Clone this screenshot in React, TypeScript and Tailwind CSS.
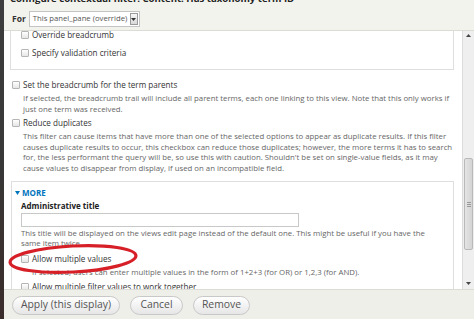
import React from "react";

const Checkbox = () => (
  <span className="inline-block w-[8px] h-[8px] shrink-0 border border-[#b5b5b5] bg-gradient-to-b from-white to-[#e6e6e6] rounded-[1px]" />
);

const CheckRow = ({ label, className = "" }: { label: string; className?: string }) => (
  <div className={"flex items-center gap-[3px] h-[12px] text-[8.1px] text-[#333] " + className}>
    <Checkbox />
    <span className="leading-[12px] whitespace-nowrap">{label}</span>
  </div>
);

export default function App() {
  return (
    <div className="w-[474px] h-[319px] flex overflow-hidden bg-[#3a3a3a] font-['Open_Sans',sans-serif]">
      <div className="w-[4px] bg-gradient-to-b from-[#3d3d3d] via-[#383838] to-[#3a2c2a]" />
      <div className="flex-1 flex flex-col min-w-0 bg-white">
        {/* header */}
        <div className="h-[31px] shrink-0 bg-[#f3f3ee] border-b border-[#dcdcd6] pl-[6px] flex flex-col overflow-hidden">
          <div className="mt-[-7px] h-[12px] leading-[12px] text-[9.6px] font-bold text-[#222] whitespace-nowrap">
            Configure contextual filter: Content: Has taxonomy term ID
          </div>
          <div className="mt-[6px] flex items-center gap-[3px]">
            <span className="text-[8.5px] font-bold text-[#333] pl-[2px]">For</span>
            <div className="w-[111px] h-[16px] bg-white border border-[#c4c4c4] flex items-center justify-between pl-[3px] pr-[1px]">
              <span className="text-[7.7px] text-[#555] whitespace-nowrap">This panel_pane (override)</span>
              <span className="w-[8px] h-[12px] border border-[#9a9a9a] bg-gradient-to-b from-[#f8f8f8] to-[#d8d8d8] flex items-center justify-center">
                <svg width="5" height="3" viewBox="0 0 5 3"><path d="M0 0h5L2.5 3z" fill="#333" /></svg>
              </span>
            </div>
          </div>
        </div>
        {/* main */}
        <div className="flex-1 flex min-h-0">
          <div className="relative flex-1 overflow-hidden pl-[8px] pr-[8px]">
            {/* first fieldset (scrolled) */}
            <div className="ml-[-2px] border-l border-r border-b border-[#dedede] pl-[10px] pb-[10px] mt-[-2px]">
              <CheckRow label="Override breadcrumb" />
              <CheckRow label="Specify validation criteria" className="mt-[6px]" />
            </div>
            <CheckRow label="Set the breadcrumb for the term parents" className="mt-[9px]" />
            <div className="ml-[11px] mt-[2px] text-[7.8px] leading-[11px] text-[#666] whitespace-nowrap">
              If selected, the breadcrumb trail will include all parent terms, each one linking to this view. Note that this only works if
              <br />
              just one term was received.
            </div>
            <CheckRow label="Reduce duplicates" className="mt-[2px]" />
            <div className="ml-[11px] mt-[2px] text-[7.8px] leading-[10.5px] text-[#666] whitespace-nowrap">
              This filter can cause items that have more than one of the selected options to appear as duplicate results. If this filter
              <br />
              causes duplicate results to occur, this checkbox can reduce those duplicates; however, the more terms it has to search
              <br />
              for, the less performant the query will be, so use this with caution. Shouldn't be set on single-value fields, as it may
              <br />
              cause values to disappear from display, if used on an incompatible field.
            </div>
            {/* MORE fieldset */}
            <div className="ml-[-1px] mt-[8px] border border-[#dedede] pl-[9px] pt-[5px] pb-[10px]">
              <div className="flex items-center gap-[2px] ml-[-6px] h-[12px] text-[8px] font-bold text-[#0074bd]">
                <svg width="5" height="4" viewBox="0 0 5 4"><path d="M0 0h5L2.5 4z" fill="#0074bd" /></svg>
                <span>MORE</span>
              </div>
              <div className="mt-[1px] h-[12px] leading-[12px] text-[8px] font-bold text-[#222]">Administrative title</div>
              <div className="mt-[1px] w-[278px] h-[14px] border border-[#c8c8c8] bg-white" />
              <div className="mt-[1px] text-[7.8px] leading-[10px] text-[#666] whitespace-nowrap">
                This title will be displayed on the views edit page instead of the default one. This might be useful if you have the
                <br />
                same item twice.
              </div>
              <CheckRow label="Allow multiple values" className="mt-[5px]" />
              <div className="ml-[11px] mt-[2px] text-[7.8px] leading-[11px] text-[#666] whitespace-nowrap">
                If selected, users can enter multiple values in the form of 1+2+3 (for OR) or 1,2,3 (for AND).
              </div>
              <CheckRow label="Allow multiple filter values to work together" className="mt-[3px]" />
            </div>
            {/* red annotation ellipse */}
            <svg className="absolute left-0 top-0 pointer-events-none" width="160" height="260" viewBox="0 0 160 260">
              <ellipse cx="69" cy="228" rx="63" ry="13" fill="none" stroke="#d61f26" strokeWidth="3.2" transform="rotate(-3 69 228)" />
            </svg>
          </div>
          {/* scrollbar */}
          <div className="w-[12px] shrink-0 bg-[#efefef] border-l border-[#dcdcdc] flex flex-col items-center pt-[3px] pb-[4px]">
            <svg width="5" height="3" viewBox="0 0 5 3"><path d="M2.5 0L5 3H0z" fill="#444" /></svg>
            <div className="flex-1 w-full flex flex-col">
              <div className="h-[121px]" />
              <div className="h-[92px] mx-[1px] rounded-[2px] border border-[#b9b9b9] bg-gradient-to-r from-[#e4e4e4] to-[#d4d4d4] flex items-center justify-center">
                <div className="flex flex-col gap-[1px]">
                  <div className="w-[4px] h-[1px] bg-[#999]" />
                  <div className="w-[4px] h-[1px] bg-[#999]" />
                  <div className="w-[4px] h-[1px] bg-[#999]" />
                </div>
              </div>
              <div className="flex-1" />
            </div>
            <svg width="5" height="3" viewBox="0 0 5 3"><path d="M0 0h5L2.5 3z" fill="#444" /></svg>
          </div>
        </div>
        {/* footer */}
        <div className="h-[30px] shrink-0 bg-[#efefea] border-t border-[#dcdcd6] flex items-center gap-[10px] pl-[8px] pt-[1px]">
          <button className="h-[19px] w-[108px] rounded-full border border-[#c8c8c8] bg-gradient-to-b from-white to-[#e6e6e6] text-[10.4px] text-[#555]">
            Apply (this display)
          </button>
          <button className="h-[19px] w-[53px] rounded-full border border-[#c8c8c8] bg-gradient-to-b from-white to-[#e6e6e6] text-[10.4px] text-[#555]">
            Cancel
          </button>
          <button className="h-[19px] w-[57px] rounded-full border border-[#c8c8c8] bg-gradient-to-b from-white to-[#e6e6e6] text-[10.4px] text-[#555]">
            Remove
          </button>
        </div>
      </div>
    </div>
  );
}
